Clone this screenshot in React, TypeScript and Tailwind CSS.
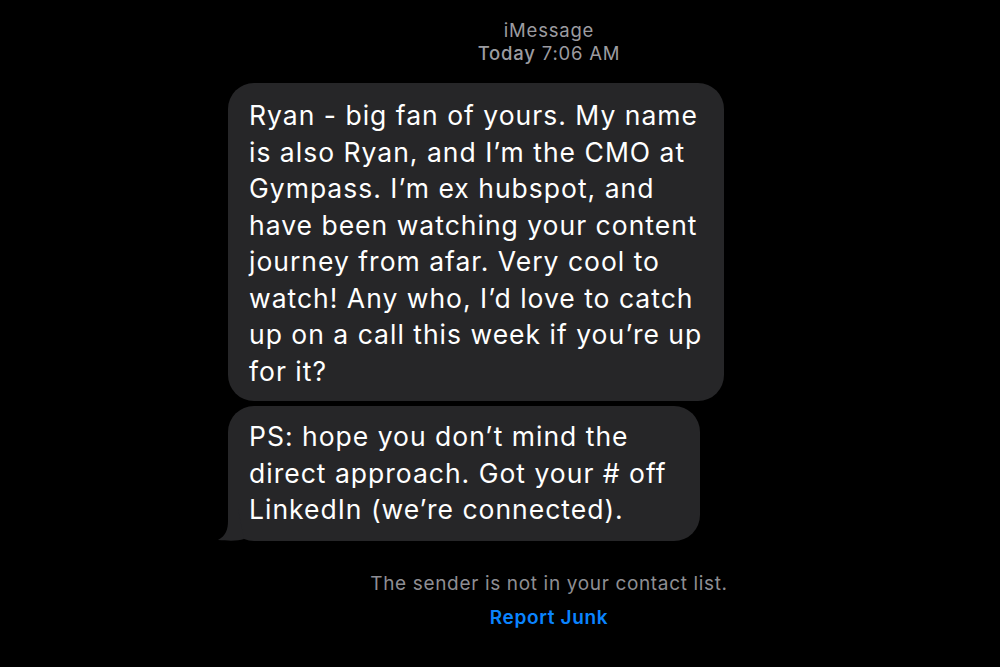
import React from 'react';

const first = [
  'Ryan - big fan of yours. My name',
  'is also Ryan, and I\u2019m the CMO at',
  'Gympass. I\u2019m ex hubspot, and',
  'have been watching your content',
  'journey from afar. Very cool to',
  'watch! Any who, I\u2019d love to catch',
  'up on a call this week if you\u2019re up',
  'for it?',
];

const second = [
  'PS: hope you don\u2019t mind the',
  'direct approach. Got your # off',
  'LinkedIn (we\u2019re connected).',
];

const Bubble: React.FC<{ lines: string[]; width: string; tail?: boolean; className?: string }> = ({ lines, width, tail, className }) => (
  <div className={`relative bg-[#262628] rounded-[26px] pl-[21px] pr-2 ${width} ${className ?? ''}`}>
    {lines.map((l, i) => (
      <div key={i} className="whitespace-nowrap text-[26.5px] leading-[36.5px] text-white tracking-[1px]">
        {l}
      </div>
    ))}
    {tail && (
      <svg className="absolute -left-[10px] bottom-0" width="30" height="32" viewBox="0 0 30 32">
        <path d="M10 0 L20 0 L26 30 C20 32 12 32 0 31 C8 27 10 20 10 12 Z" fill="#262628" />
      </svg>
    )}
  </div>
);

export default function App() {
  return (
    <div className="w-[1000px] h-[667px] bg-black overflow-hidden" style={{ fontFamily: 'Inter, "Liberation Sans", sans-serif' }}>
      <div className="ml-[218px] w-[662px] flex flex-col">
        <div className="flex flex-col items-center pt-[19px] text-[18.5px] leading-[23px] tracking-[0.8px] text-[#9c9ca1]">
          <div>iMessage</div>
          <div>
            <span className="font-medium">Today</span> 7:06 AM
          </div>
        </div>
        <div className="pl-[10px] mt-[18px] flex flex-col gap-[5px]">
          <Bubble lines={first} width="w-[496px]" className="pt-[14px] pb-[12px]" />
          <Bubble lines={second} width="w-[472px]" tail className="pt-[12px] pb-[13px]" />
        </div>
        <div className="flex flex-col items-center mt-[31px] text-[19px] tracking-[0.65px]">
          <div className="text-[#8e8e93] leading-[24px]">The sender is not in your contact list.</div>
          <div className="text-[#0a84ff] font-semibold leading-[24px] mt-[10px]">Report Junk</div>
        </div>
      </div>
    </div>
  );
}
